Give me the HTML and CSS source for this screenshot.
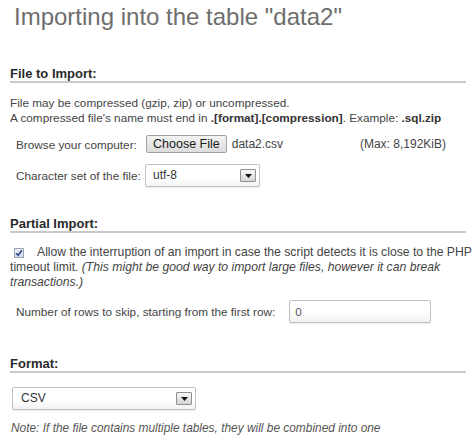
FILE: index.html
```html
<!DOCTYPE html>
<html lang="en">
<head>
<meta charset="utf-8">
<title>Importing into the table "data2"</title>
<link rel="stylesheet" href="styles.css">
</head>
<body>
<div class="page">
  <h1 class="title">Importing into the table "data2"</h1>

  <h2 class="section-head">File to Import:</h2>
  <p class="desc">File may be compressed (gzip, zip) or uncompressed.<br>A compressed file's name must end in <b>.[format].[compression]</b>. Example: <b>.sql.zip</b></p>

  <div class="row row-file">
    <span class="label">Browse your computer:</span>
    <span class="file-btn">Choose File</span>
    <span class="file-name">data2.csv</span>
    <span class="max">(Max: 8,192KiB)</span>
  </div>

  <div class="row row-charset">
    <span class="label">Character set of the file:</span>
    <span class="select select-charset">
      <span class="select-text">utf-8</span>
      <span class="select-arrow"><svg width="7" height="4" viewBox="0 0 7 4"><path d="M0 0H7L3.5 4Z" fill="#111"/></svg></span>
    </span>
  </div>

  <h2 class="section-head head-partial">Partial Import:</h2>
  <p class="desc check-para"><span class="checkbox"><svg width="8" height="8" viewBox="0 0 8 8"><path d="M1.2 4.2L3.2 6.3L6.9 1.2" fill="none" stroke="#2b4a8a" stroke-width="1.6"/></svg></span>Allow the interruption of an import in case the script detects it is close to the PHP timeout limit. <i>(This might be good way to import large files, however it can break transactions.)</i></p>

  <div class="row row-skip">
    <span class="label-skip">Number of rows to skip, starting from the first row:</span>
    <span class="text-input">0</span>
  </div>

  <h2 class="section-head head-format">Format:</h2>
  <div class="row row-format">
    <span class="select select-format">
      <span class="select-text">CSV</span>
      <span class="select-arrow"><svg width="7" height="4" viewBox="0 0 7 4"><path d="M0 0H7L3.5 4Z" fill="#111"/></svg></span>
    </span>
  </div>
  <p class="note">Note: If the file contains multiple tables, they will be combined into one</p>
</div>
</body>
</html>
```

FILE: styles.css
```css
html, body {
  margin: 0;
  padding: 0;
  background: #fff;
}

body {
  font-family: "Liberation Sans", Arial, sans-serif;
  font-size: 11.75px;
  line-height: 15px;
  color: #444;
}

.page {
  padding: 3px 8px 0 10px;
}

.title {
  margin: 0 0 0 4px;
  font-size: 24px;
  line-height: 27px;
  font-weight: normal;
  color: #6e6e6e;
}

.section-head {
  margin: 36px 0 0 0;
  font-size: 13px;
  line-height: 15px;
  font-weight: bold;
  color: #2a2a2a;
  border-bottom: 2px solid #c9c9c9;
}

.head-partial {
  margin-top: 29px;
}

.head-format {
  margin-top: 33px;
}

.desc {
  margin: 12px 0 0 0;
}

.desc b {
  color: #333;
}

.row {
  display: flex;
  align-items: center;
}

.label {
  width: 130px;
  margin-left: 6px;
  flex: none;
}

.row-file {
  margin-top: 10px;
  height: 18px;
  padding-right: 20px;
}

.file-btn {
  box-sizing: border-box;
  height: 18px;
  padding: 0 6px;
  border: 1px solid #a3a3a3;
  border-radius: 2px;
  background: linear-gradient(#f3f3f3, #dcdcdc);
  color: #1a1a1a;
  font-size: 12.5px;
  line-height: 16px;
}

.file-name {
  margin-left: 5px;
  color: #444;
  font-size: 12px;
}

.max {
  margin-left: auto;
  font-size: 12px;
}

.row-charset {
  margin-top: 11px;
}

.select {
  box-sizing: border-box;
  display: flex;
  align-items: center;
  height: 23px;
  border: 1px solid #c2c2c2;
  border-radius: 2px;
  background: linear-gradient(#ffffff 60%, #f2f2f2);
  box-shadow: 0 1px 1px rgba(0, 0, 0, 0.08);
  color: #333;
  font-size: 12px;
}

.select-charset {
  width: 115px;
  margin-left: -1px;
  padding: 0 3px 0 7px;
}

.select-format {
  width: 184px;
  margin-left: 2px;
  padding: 0 3px 0 8px;
}

.select-text {
  flex: 1;
}

.select-arrow {
  box-sizing: border-box;
  width: 16px;
  height: 13px;
  display: flex;
  align-items: center;
  justify-content: center;
  border: 1px solid #8f8f8f;
  border-radius: 1px;
  background: linear-gradient(#f7f7f7, #d6d6d6);
}

.check-para {
  margin-top: 12px;
  margin-right: -7px;
  font-size: 12.2px;
}

.checkbox {
  box-sizing: border-box;
  display: inline-flex;
  align-items: center;
  justify-content: center;
  width: 10px;
  height: 10px;
  margin: 0 13px 0 4px;
  vertical-align: -1px;
  border: 1px solid #9aa5b5;
  background: linear-gradient(#eef2f8, #d3dbe8);
}

.row-skip {
  margin-top: 10px;
}

.label-skip {
  margin-left: 6px;
}

.text-input {
  box-sizing: border-box;
  width: 142px;
  height: 23px;
  margin-left: 14px;
  padding: 0 5px;
  line-height: 21px;
  border: 1px solid #c2c2c2;
  border-radius: 2px;
  background: linear-gradient(#ffffff 50%, #f0f0f0);
  box-shadow: 0 1px 1px rgba(0, 0, 0, 0.08);
  color: #555;
}

.row-format {
  margin-top: 14px;
}

.note {
  margin: 11px 0 0 1px;
  font-size: 11.9px;
  font-style: italic;
  color: #555;
}
```
